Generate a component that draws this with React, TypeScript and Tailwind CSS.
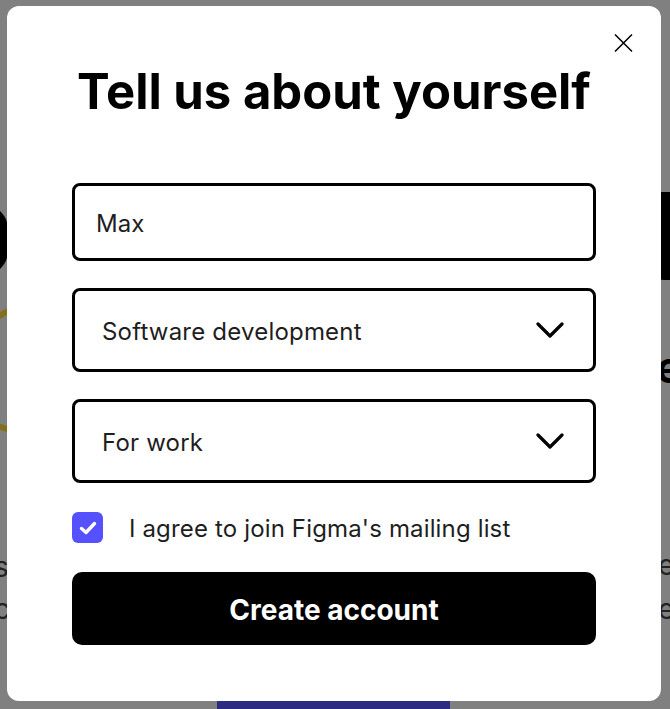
import { useState } from 'react';

const font = { fontFamily: 'Inter, "Noto Sans", sans-serif' };

function Chevron() {
  return (
    <svg width="28" height="16" viewBox="0 0 28 16" fill="none" aria-hidden>
      <path d="M2 2l12 12L26 2" stroke="#000" strokeWidth="3.2" strokeLinecap="round" strokeLinejoin="round" />
    </svg>
  );
}

function SelectBox({ value }: { value: string }) {
  return (
    <div className="flex h-[84px] items-center justify-between rounded-[8px] border-[3px] border-black pl-[27px] pr-[29px]">
      <span className="pt-[4px] text-[24px] tracking-[0.2px] text-[#1e1e1e]">{value}</span>
      <Chevron />
    </div>
  );
}

// page behind the dialog, seen through the grey scrim
function Backdrop() {
  return (
    <div className="absolute inset-0 overflow-hidden bg-[#808080]">
      <div className="absolute -left-[40px] top-[205px] h-[70px] w-[48px] rounded-full bg-black" />
      <div className="absolute -left-[10px] top-[312px] h-[6px] w-[22px] -rotate-[30deg] bg-[#85701a]" />
      <div className="absolute -left-[10px] top-[424px] h-[6px] w-[22px] rotate-[20deg] bg-[#85701a]" />
      <div className="absolute -right-[20px] top-[192px] h-[88px] w-[40px] rounded-bl-[14px] bg-black" />
      <span className="absolute -left-[6px] top-[546px] text-[28px] text-[#222]">s</span>
      <span className="absolute -left-[6px] top-[588px] text-[28px] text-[#222]">c</span>
      <span className="absolute left-[658px] top-[544px] text-[28px] text-[#222]">e</span>
      <span className="absolute left-[658px] top-[588px] text-[28px] text-[#222]">e</span>
      <span className="absolute left-[656px] top-[334px] text-[44px] font-bold text-black">e</span>
      <div className="absolute left-[217px] top-[700px] h-[20px] w-[233px] bg-[#2d2a82]" />
    </div>
  );
}

export default function App() {
  const [agree, setAgree] = useState(true);

  return (
    <div className="relative h-[709px] w-[670px] overflow-hidden" style={font}>
      <Backdrop />

      <div className="relative ml-[7px] mt-[6px] flex h-[695px] w-[654px] flex-col rounded-[12px] bg-white px-[65px] pt-[57px]">
        <button className="absolute right-[28px] top-[28px] text-black" aria-label="Close">
          <svg width="19" height="18" viewBox="0 0 19 18" fill="none">
            <path d="M1 0.5l17 17M18 0.5l-17 17" stroke="#000" strokeWidth="1.5" />
          </svg>
        </button>

        <h1 className="text-center text-[49px] font-bold leading-[58px] text-black">Tell us about yourself</h1>

        <div className="mt-[62px] flex flex-col gap-[27px]">
          <div className="flex h-[78px] items-center rounded-[8px] border-[3px] border-black pl-[21px]">
            <span className="pt-[3px] text-[24px] text-[#1e1e1e]">Max</span>
          </div>
          <SelectBox value="Software development" />
          <SelectBox value="For work" />
        </div>

        <div className="mt-[29px] flex flex-col gap-[29px]">
          <label className="flex h-[31px] cursor-pointer items-center gap-[26px]">
            <button
              type="button"
              onClick={() => setAgree(!agree)}
              className="flex h-[31px] w-[31px] shrink-0 items-center justify-center rounded-[6px] bg-[#5551ff]"
            >
              {agree && (
                <svg width="18" height="14" viewBox="0 0 18 14" fill="none">
                  <path d="M2.5 7.5l4.5 4L15.5 2.5" stroke="#fff" strokeWidth="3.4" strokeLinecap="round" strokeLinejoin="round" />
                </svg>
              )}
            </button>
            <span className="pt-[3px] text-[24px] tracking-[0.15px] text-[#1e1e1e]">I agree to join Figma's mailing list</span>
          </label>

          <button className="flex h-[73px] items-center justify-center rounded-[10px] bg-black pt-[2px] text-[28px] font-bold text-white">
            Create account
          </button>
        </div>
      </div>
    </div>
  );
}
